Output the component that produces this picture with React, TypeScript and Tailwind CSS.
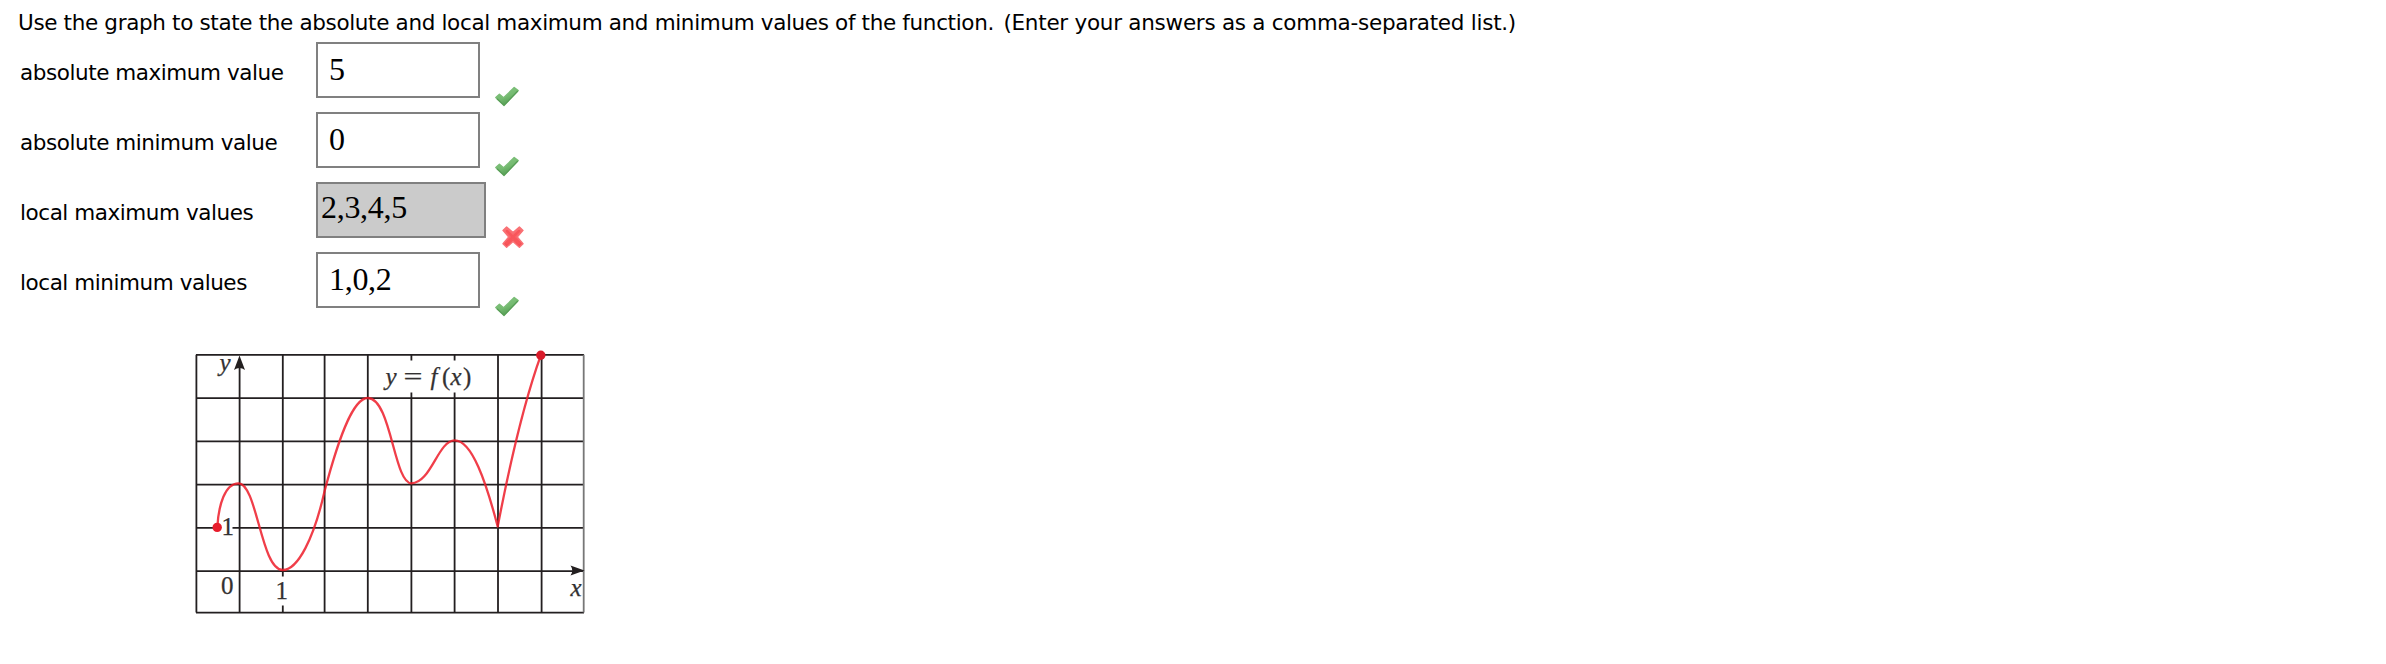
const CheckIcon = () => (
  <svg className="block h-[22px] w-[26px]" viewBox="0 0 26 22">
    <defs>
      <linearGradient id="check" x1="0" y1="0" x2="0.5" y2="1">
        <stop offset="0" stopColor="#8fcb89" />
        <stop offset="0.6" stopColor="#74ba70" />
        <stop offset="1" stopColor="#509a50" />
      </linearGradient>
    </defs>
    <path
      d="M1.8 11.4 L5.4 8.2 L9.6 11.8 L20.2 1.6 L24.2 4.6 L10 19.4 Z"
      fill="url(#check)"
      stroke="#7abd76"
      strokeWidth="1.4"
      strokeLinejoin="round"
    />
    <path d="M3 12.8 L10 19.2 L23.8 5" fill="none" stroke="#579c56" strokeWidth="1.2" />
  </svg>
);

const CrossIcon = () => (
  <svg className="block h-[22px] w-[22px]" viewBox="0 0 22 22">
    <defs>
      <linearGradient id="cross" x1="0" y1="0" x2="0" y2="1">
        <stop offset="0" stopColor="#fb7a7a" />
        <stop offset="1" stopColor="#f64a50" />
      </linearGradient>
    </defs>
    <path
      d="M4.6 1 L11 6.6 L17.4 1 L21 4.4 L15.2 11 L21 17.8 L17.4 21.2 L11 15.4 L4.6 21.2 L1 17.8 L6.8 11 L1 4.4 Z"
      fill="url(#cross)"
      stroke="#f97075"
      strokeWidth="1.4"
      strokeLinejoin="round"
    />
    <path d="M5 5 L17 17 M17 5 L5 17" stroke="#f9565b" strokeWidth="2.5" strokeLinecap="round" />
  </svg>
);

type Answer = { label: string; value: string; correct: boolean };

const answers: Answer[] = [
  { label: "absolute maximum value", value: "5", correct: true },
  { label: "absolute minimum value", value: "0", correct: true },
  { label: "local maximum values", value: "2,3,4,5", correct: false },
  { label: "local minimum values", value: "1,0,2", correct: true },
];

const AnswerRow = ({ label, value, correct }: Answer) => (
  <div className="flex h-14 items-start">
    <div className="w-[296px] pt-[17px] text-[21.5px] leading-7 tracking-[-0.44px] whitespace-nowrap">{label}</div>
    <div
      className={
        correct
          ? "h-14 w-[164px] border-2 border-[#808080] bg-white pt-[7px] pl-[11px]"
          : "h-14 w-[170px] border-2 border-[#808080] bg-[#cbcbcb] pt-[5px] pl-[3px]"
      }
    >
      <span className="block font-['Liberation_Serif',serif] text-[32px] leading-9 tracking-[-0.3px]">
        {value}
      </span>
    </div>
    <div className={correct ? "pt-11 pl-3.5" : "pt-11 pl-4"}>{correct ? <CheckIcon /> : <CrossIcon />}</div>
  </div>
);

const Graph = () => (
  <svg
    className="block h-[280px] w-[400px] font-['Liberation_Serif',serif]"
    viewBox="190 340 400 280"
  >
    <g stroke="#231f20" strokeWidth="1.8" fill="none">
      <path d="M196 354.9H584 M196 398.2H584 M196 441.3H584 M196 484.6H584 M196 527.8H217 M232.5 527.8H584 M196 571.1H584 M196 612.7H584" />
      <path d="M196.4 354.7V612.6 M239.6 360V612.6 M282.8 354.7V576.5 M282.8 605.5V612.6 M324.6 354.7V612.6 M367.8 354.7V612.6 M411.4 354.7V360.5 M411.4 392.5V612.6 M454.6 354.7V360.5 M454.6 392.5V612.6 M498 354.7V612.6 M541.6 354.7V612.6" />
      <path d="M583.7 354.7V612.6" stroke="#777" />
    </g>
    <path d="M239.5 355.5 L245 370 Q239.5 366 234 370 Z" fill="#231f20" />
    <path d="M584.5 570.5 L570.5 565.5 Q574 570.5 570.5 575.5 Z" fill="#231f20" />
    <path
      d="M217.3 527.5 C218.5 505 225 483.3 238.5 483.3 C257 483.3 261 570 282.7 570 C298 570 314 538 324.6 491 C337 444 352 398 367.8 398 C391 398 394 483.3 411.4 483.3 C431 483.3 438 440.4 454.7 440.4 C472 440.4 486 482 497.7 526.5 C508 473 524 402 540.8 355.3"
      fill="none"
      stroke="#ed1c29"
      strokeOpacity="0.85"
      strokeWidth="2.3"
      strokeLinejoin="round"
    />
    <circle cx="217.2" cy="527.4" r="4.7" fill="#e81c2b" />
    <circle cx="540.8" cy="355.3" r="4.7" fill="#d91c2b" />
    <g fill="#333132" stroke="#333132" strokeWidth="0.25" fontSize="25">
      <text x="219.5" y="370.5" fontStyle="italic">y</text>
      <text x="221.5" y="535">1</text>
      <text x="221" y="594">0</text>
      <text x="275.5" y="599">1</text>
      <text x="570.5" y="595.5" fontStyle="italic">x</text>
      <text x="385.5" y="384.5" fontStyle="italic">y</text>
      <text x="403.5" y="385" textLength="19" lengthAdjust="spacingAndGlyphs">=</text>
      <text x="430.5" y="384.5" fontStyle="italic">f</text>
      <text x="442" y="384.5">(</text>
      <text x="450.5" y="384.5" fontStyle="italic">x</text>
      <text x="463" y="384.5">)</text>
    </g>
  </svg>
);

export default function App() {
  return (
    <main className="h-[664px] w-[2386px] bg-white font-['DejaVu_Sans',Verdana,sans-serif] text-black">
      <p className="h-[42px] pt-[9px] pl-[18px] text-[21.5px] leading-7 tracking-[-0.345px] whitespace-nowrap">
        Use the graph to state the absolute and local maximum and minimum values of the function.{" "}
        <span className="ml-[3px] tracking-[-0.265px]">(Enter your answers as a comma-separated list.)</span>
      </p>
      <div className="flex flex-col gap-3.5 pl-5">
        {answers.map((a) => (
          <AnswerRow key={a.label} {...a} />
        ))}
      </div>
      <div className="pt-8 pl-[190px]">
        <Graph />
      </div>
    </main>
  );
}
